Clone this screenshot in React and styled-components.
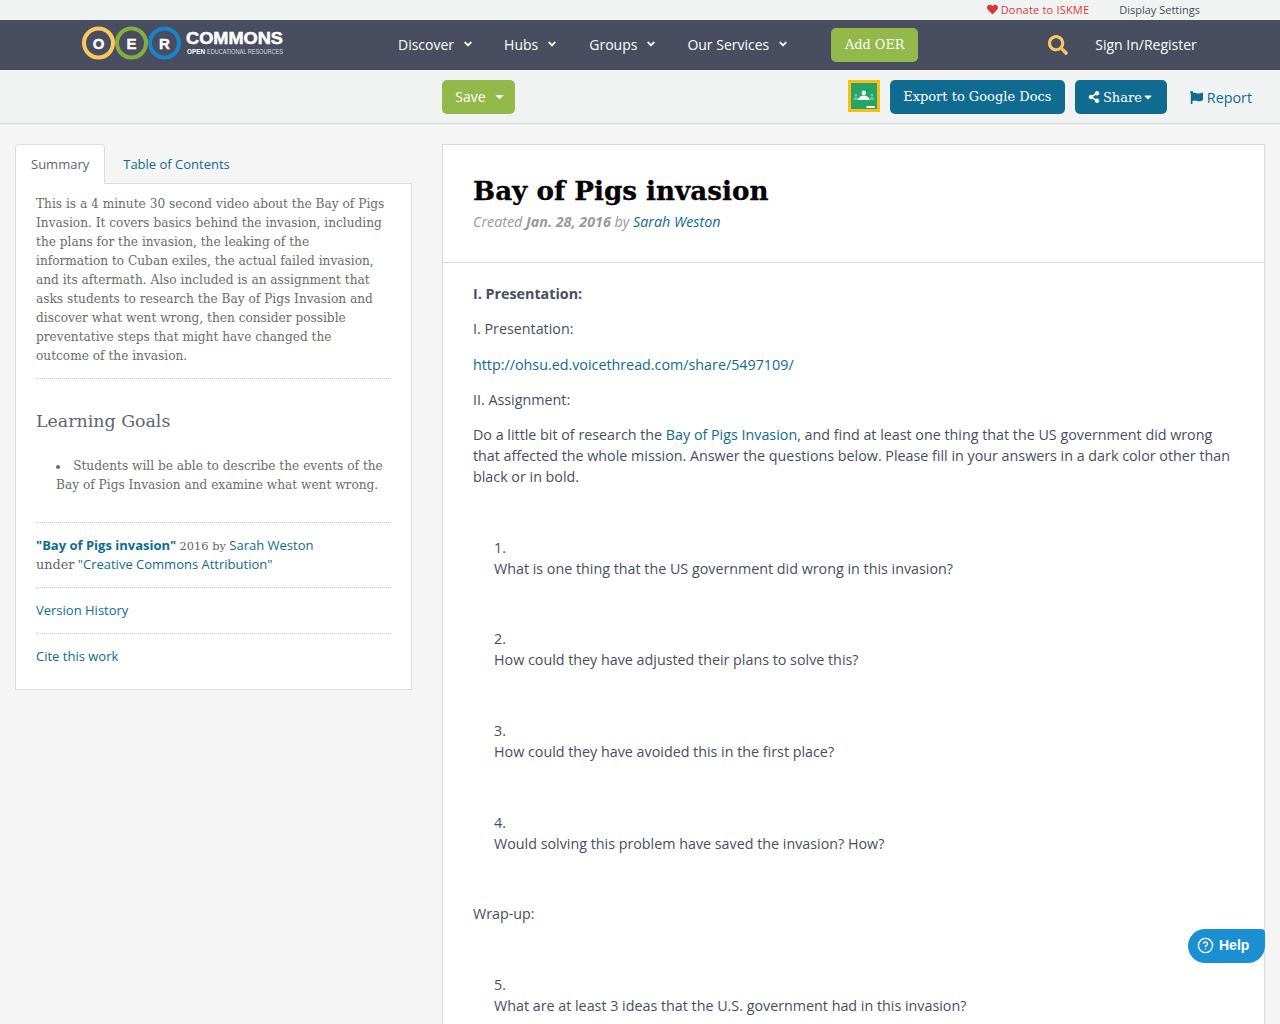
import React from 'react';
import styled, { createGlobalStyle } from 'styled-components';
import { FaHeart, FaSearch, FaShareAlt, FaFlag, FaCaretDown, FaAngleDown } from 'react-icons/fa';
import { CircleHelp } from 'lucide-react';

const GlobalStyle = createGlobalStyle`
  html, body { margin: 0; padding: 0; height: 1024px; overflow: hidden; }
  body {
    background: #f5f5f5;
    color: #484e60;
    font-family: "Open Sans", "Liberation Sans", sans-serif;
    font-size: 14.3px;
    line-height: 21px;
  }
  a { color: #0f6b8f; text-decoration: none; }
`;

const slab = '"DejaVu Serif", "Liberation Serif", serif';

const TopBar = styled.div`
  height: 20px;
  box-sizing: border-box;
  padding: 0 80px 2px 0;
  background: #f1f3f2;
  display: flex;
  justify-content: flex-end;
  align-items: center;
  gap: 30px;
  font-size: 11px;
  color: #484e60;
`;

const Donate = styled.a`
  color: #d9363a;
  display: flex;
  align-items: center;
  gap: 3px;
  letter-spacing: 0.19px;
`;

const NavBar = styled.nav`
  height: 50px;
  background: #484e60;
  display: flex;
  align-items: center;
  padding-left: 82px;
  color: #fff;
  font-size: 14px;
`;

const LogoSvg = styled.svg`
  flex: none;
  margin-bottom: 5px;
`;

const NavItems = styled.div`
  display: flex;
  align-items: center;
  margin-left: 104px;
`;

const NavItem = styled.a`
  display: flex;
  align-items: center;
  color: #fff;
  padding-bottom: 2px;
  margin-right: ${p => p.$gap}px;
  svg { margin-left: 8px; font-size: 12px; }
`;

const AddButton = styled.a`
  width: 87px;
  height: 34px;
  box-sizing: border-box;
  padding-bottom: 1px;
  margin-left: 42px;
  border-radius: 5px;
  background: #93b94a;
  color: #fff;
  display: flex;
  align-items: center;
  justify-content: center;
  font-family: ${slab};
  font-size: 12.9px;
`;

const SearchIcon = styled(FaSearch)`
  margin-left: 130px;
  color: #fdc75e;
  font-size: 20px;
`;

const SignIn = styled.a`
  margin-left: 27px;
  padding-bottom: 2px;
  color: #fff;
`;

const ToolBar = styled.div`
  height: 54px;
  box-sizing: border-box;
  background: #f1f3f2;
  border-bottom: 1px solid #d8d8d8;
  display: flex;
  align-items: center;
  padding: 1px 28px 0 442px;
`;

const SaveButton = styled.a`
  width: 73px;
  height: 34px;
  box-sizing: border-box;
  padding: 0 0 2px 4px;
  border-radius: 5px;
  background: #93b94a;
  color: #fff;
  display: flex;
  align-items: center;
  justify-content: center;
  gap: 7px;
  font-size: 14px;
  margin-right: auto;
`;

const ClassroomBox = styled.svg`
  width: 32px;
  height: 32px;
  margin: 0 10px 2px 0;
`;

const BlueButton = styled.a`
  height: 34px;
  box-sizing: border-box;
  padding: 0 ${p => p.$pad}px ${p => p.$lift}px;
  margin-right: ${p => p.$gap}px;
  border-radius: 5px;
  background: #0f6b8f;
  color: #fff;
  display: flex;
  align-items: center;
  font-family: ${slab};
  font-size: 13px;
  white-space: nowrap;
`;

const ShareIcon = styled(FaShareAlt)`
  font-size: 12px;
  margin-right: 3px;
`;

const ReportLink = styled.a`
  display: flex;
  align-items: center;
  gap: 4px;
  svg { font-size: 13px; }
`;

const Main = styled.div`
  display: flex;
  align-items: flex-start;
  gap: 30px;
  padding: 20px 15px 0;
`;

const Sidebar = styled.aside`
  width: 397px;
  flex: none;
`;

const Tabs = styled.div`
  display: flex;
  height: 40px;
  font-size: 13px;
`;

const Tab = styled.div`
  padding: ${p => (p.$active ? 9 : 10)}px 15px 0;
  height: ${p => (p.$active ? 40 : 39)}px;
  box-sizing: border-box;
  margin-right: 3px;
  position: relative;
  z-index: 1;
  ${p => p.$active && `
    background: #fff;
    border: 1px solid #ddd;
    border-bottom: none;
    border-radius: 4px 4px 0 0;
    color: #5f6470;
  `}
`;

const SidePanel = styled.div`
  background: #fff;
  border: 1px solid #ddd;
  margin-top: -1px;
  padding: 0 20px 23px;
`;

const Summary = styled.p`
  margin: 0;
  padding: 11px 0 12px;
  font-family: ${slab};
  font-size: 12.17px;
  line-height: 19px;
  color: #6b6b6b;
  white-space: nowrap;
  border-bottom: 1px dotted #ccc;
`;

const GoalsTitle = styled.h3`
  margin: 29px 0 23px;
  font-family: ${slab};
  font-size: 17.4px;
  line-height: 26px;
  font-weight: 400;
  color: #5f6470;
`;

const GoalsList = styled.ul`
  margin: 0;
  padding: 0 0 27px 20px;
  list-style-position: inside;
  font-family: ${slab};
  font-size: 12.17px;
  line-height: 19px;
  color: #6b6b6b;
  white-space: nowrap;
  border-bottom: 1px dotted #ccc;
`;

const SideRow = styled.div`
  padding: 13px 0 ${p => (p.$last ? 0 : 13)}px;
  font-size: 13px;
  line-height: 19px;
  color: #5f6470;
  border-bottom: ${p => (p.$last ? 'none' : '1px dotted #ccc')};
`;

const Serif = styled.span`
  font-family: ${slab};
  font-size: ${p => p.$size}px;
  line-height: 1;
`;

const Article = styled.main`
  flex: 1;
  min-height: 900px;
  background: #fff;
  border: 1px solid #d8d8d8;
`;

const ArticleHead = styled.header`
  height: 118px;
  box-sizing: border-box;
  padding: 26px 30px 0;
  border-bottom: 1px solid #d8d8d8;
`;

const Title = styled.h1`
  margin: 0;
  font-family: ${slab};
  font-size: 26.2px;
  line-height: 40px;
  font-weight: 900;
  color: #000;
  -webkit-text-stroke: 0.3px #000;
`;

const Byline = styled.div`
  font-style: italic;
  color: #999;
  b { font-weight: 700; }
`;

const ArticleBody = styled.div`
  padding: 20px 30px 0;
`;

const Para = styled.p`
  margin: ${p => p.$before || 0}px 0 ${p => p.$after ?? 14.25}px;
`;

const Question = styled.div`
  margin: 0 0 ${p => p.$after}px 21px;
`;

const HelpButton = styled.a`
  position: fixed;
  left: 1188px;
  top: 929px;
  width: 77px;
  height: 34px;
  box-sizing: border-box;
  border-radius: 17px 4px 17px 17px;
  background: #1a8fd1;
  color: #fff;
  display: flex;
  align-items: center;
  gap: 5px;
  padding: 0 0 1px 9px;
  font-family: "Liberation Sans", sans-serif;
  font-weight: 700;
  font-size: 14px;
`;

const Logo = () => (
  <LogoSvg width="212" height="36" viewBox="0 0 212 36">
    {[[16.5, '#fdc75e', 'O'], [49.5, '#84ae3d', 'E'], [82.5, '#1a84c8', 'R']].map(([cx, color, letter]) => (
      <g key={letter}>
        <circle cx={cx} cy="18" r="14.5" fill="#484e60" stroke={color} strokeWidth="4" />
        <text x={cx} y="23.500" textAnchor="middle" fill="#fff" stroke="#fff" strokeWidth="0.4" fontFamily="Liberation Sans" fontWeight="700" fontSize="15">{letter}</text>
      </g>
    ))}
    <text x="104" y="18.500" fill="#fff" stroke="#fff" strokeWidth="0.5" fontFamily="Liberation Sans" fontWeight="700" fontSize="17" textLength="97" lengthAdjust="spacingAndGlyphs">COMMONS</text>
    <text x="105" y="29" fill="#fff" fontFamily="Liberation Sans" fontWeight="700" fontSize="6.4">OPEN</text>
    <text x="125" y="29" fill="#d8dae0" fontFamily="Liberation Sans" fontSize="6.4" textLength="76" lengthAdjust="spacingAndGlyphs">EDUCATIONAL RESOURCES</text>
  </LogoSvg>
);

const Classroom = () => (
  <ClassroomBox viewBox="0 0 32 32">
    <rect width="32" height="32" fill="#fdbc11" />
    <rect x="3" y="3" width="26" height="26" fill="#22a565" />
    <circle cx="7.800" cy="15" r="1.500" fill="#6fc39b" />
    <circle cx="23.800" cy="15" r="1.500" fill="#6fc39b" />
    <path d="M5 20c.3-2 1.300-3 2.800-3s2.500 1 2.800 3zM21 20c.3-2 1.300-3 2.800-3s2.500 1 2.800 3z" fill="#6fc39b" />
    <circle cx="15.800" cy="12.800" r="2.200" fill="#fff" />
    <path d="M10 20c.4-3 2.800-4.500 5.800-4.500s5.400 1.500 5.800 4.500z" fill="#fff" />
    <rect x="18.600" y="26" width="8.400" height="2" fill="#fff" />
  </ClassroomBox>
);

const questions = [
  ['1.', 'What is one thing that the US government did wrong in this invasion?', 49.3],
  ['2.', 'How could they have adjusted their plans to solve this?', 50],
  ['3.', 'How could they have avoided this in the first place?', 49.67],
  ['4.', 'Would solving this problem have saved the invasion? How?', 0],
];

export default function App() {
  return (
    <>
      <GlobalStyle />
      <TopBar>
        <Donate><FaHeart size={11} />Donate to ISKME</Donate>
        <span>Display Settings</span>
      </TopBar>
      <NavBar>
        <Logo />
        <NavItems>
          <NavItem $gap={30}>Discover<FaAngleDown /></NavItem>
          <NavItem $gap={31}>Hubs<FaAngleDown /></NavItem>
          <NavItem $gap={30}>Groups<FaAngleDown /></NavItem>
          <NavItem $gap={0}>Our Services<FaAngleDown /></NavItem>
        </NavItems>
        <AddButton>Add OER</AddButton>
        <SearchIcon />
        <SignIn>Sign In/Register</SignIn>
      </NavBar>
      <ToolBar>
        <SaveButton>Save <FaCaretDown size={13} /></SaveButton>
        <Classroom />
        <BlueButton $pad={13.5} $gap={10} $lift={2}>Export to Google Docs</BlueButton>
        <BlueButton $pad={13} $gap={23} $lift={0}><ShareIcon />Share<FaCaretDown size={12} /></BlueButton>
        <ReportLink><FaFlag />Report</ReportLink>
      </ToolBar>
      <Main>
        <Sidebar>
          <Tabs>
            <Tab $active>Summary</Tab>
            <Tab><a>Table of Contents</a></Tab>
          </Tabs>
          <SidePanel>
            <Summary>
              This is a 4 minute 30 second video about the Bay of Pigs<br />
              Invasion. It covers basics behind the invasion, including<br />
              the plans for the invasion, the leaking of the<br />
              information to Cuban exiles, the actual failed invasion,<br />
              and its aftermath. Also included is an assignment that<br />
              asks students to research the Bay of Pigs Invasion and<br />
              discover what went wrong, then consider possible<br />
              preventative steps that might have changed the<br />
              outcome of the invasion.
            </Summary>
            <GoalsTitle>Learning Goals</GoalsTitle>
            <GoalsList>
              <li>Students will be able to describe the events of the<br />Bay of Pigs Invasion and examine what went wrong.</li>
            </GoalsList>
            <SideRow>
              <a><b>"Bay of Pigs invasion"</b></a> <Serif $size={11.4}>2016 by</Serif> <a>Sarah Weston</a><br />
              <Serif $size={12.8}>under</Serif> <a>"Creative Commons Attribution"</a>
            </SideRow>
            <SideRow><a>Version History</a></SideRow>
            <SideRow $last><a>Cite this work</a></SideRow>
          </SidePanel>
        </Sidebar>
        <Article>
          <ArticleHead>
            <Title>Bay of Pigs invasion</Title>
            <Byline>Created <b>Jan. 28, 2016</b> by <a>Sarah Weston</a></Byline>
          </ArticleHead>
          <ArticleBody>
            <Para><b>I. Presentation:</b></Para>
            <Para>I. Presentation:</Para>
            <Para><a>http://ohsu.ed.voicethread.com/share/5497109/</a></Para>
            <Para>II. Assignment:</Para>
            <Para $after={50}>
              Do a little bit of research the <a>Bay of Pigs Invasion</a>, and find at least one thing that the US government did wrong
              that affected the whole mission. Answer the questions below. Please fill in your answers in a dark color other than
              black or in bold.
            </Para>
            {questions.map(([num, text, after]) => (
              <Question key={num} $after={after}>{num}<br />{text}</Question>
            ))}
            <Para $before={49} $after={50}>Wrap-up:</Para>
            <Question $after={0}>5.<br />What are at least 3 ideas that the U.S. government had in this invasion?</Question>
          </ArticleBody>
        </Article>
      </Main>
      <HelpButton><CircleHelp size={17} />Help</HelpButton>
    </>
  );
}
